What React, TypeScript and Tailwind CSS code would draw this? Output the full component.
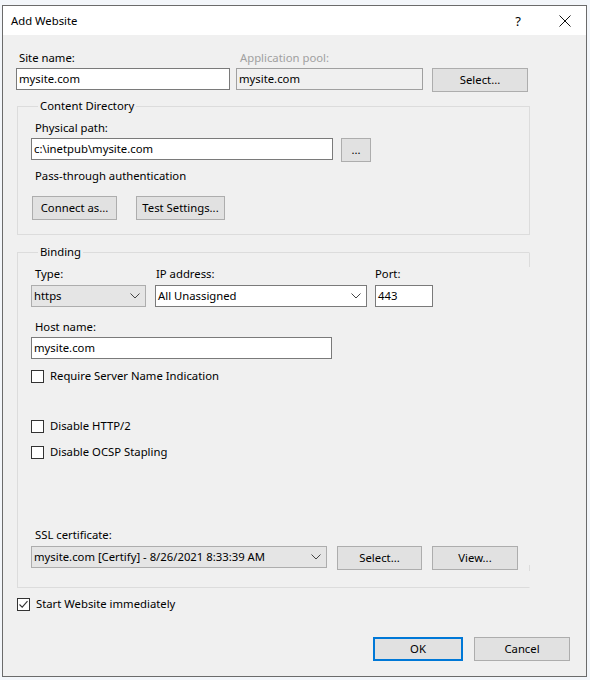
import { useState } from "react";

const font = { fontFamily: '"Noto Sans", "Segoe UI", sans-serif' };

function TextBox({ value, className = "" }: { value: string; className?: string }) {
  return (
    <div className={`h-[22px] border border-[#7a7a7a] bg-white pl-[2px] flex items-center text-black ${className}`}>
      {value}
    </div>
  );
}

function Chevron() {
  return (
    <svg width="10" height="6" viewBox="0 0 10 6" className="shrink-0">
      <path d="M0.5 0.5 L5 5 L9.5 0.5" fill="none" stroke="#444" strokeWidth="1" />
    </svg>
  );
}

function Combo({ value, editable = false, className = "" }: { value: string; editable?: boolean; className?: string }) {
  return (
    <div
      className={`h-[22px] border flex items-center justify-between pl-[2px] pr-[5px] ${
        editable ? "bg-white border-[#7a7a7a]" : "bg-[#e5e5e5] border-[#adadad]"
      } ${className}`}
    >
      <span>{value}</span>
      <Chevron />
    </div>
  );
}

function Btn({ label, className = "" }: { label: string; className?: string }) {
  return (
    <button className={`h-[24px] border border-[#adadad] bg-[#e1e1e1] text-black flex items-center justify-center ${className}`}>
      {label}
    </button>
  );
}

function Check({ label, checked = false }: { label: string; checked?: boolean }) {
  const [on, setOn] = useState(checked);
  return (
    <label className="flex items-center h-[16px] cursor-default" onClick={() => setOn(!on)}>
      <span className="w-[13px] h-[13px] border border-[#333] bg-white flex items-center justify-center">
        {on && (
          <svg width="11" height="11" viewBox="0 0 11 11">
            <path d="M1.5 5.5 L4.2 8.2 L9.5 2.2" fill="none" stroke="#333" strokeWidth="1.1" />
          </svg>
        )}
      </span>
      <span className="ml-[6px]">{label}</span>
    </label>
  );
}

export default function App() {
  return (
    <div className="w-[590px] h-[680px] bg-[#f3f6fa] pt-[5px] pl-[2px] overflow-hidden text-[11.3px] leading-[16px] text-black" style={font}>
      <div className="w-[585px] h-[672px] border border-[#6b6b6b] bg-[#f0f0f0] flex flex-col">
        {/* title bar */}
        <div className="h-[29px] bg-white flex items-center pl-[8px] shrink-0">
          <span>Add Website</span>
          <span className="ml-auto mr-[38px] text-[13px]">?</span>
          <svg width="12" height="12" viewBox="0 0 12 12" className="mr-[15px]">
            <path d="M0.5 0.5 L11.5 11.5 M11.5 0.5 L0.5 11.5" stroke="#111" strokeWidth="1" />
          </svg>
        </div>

        <div className="pl-[13px] pt-[15px] flex flex-col">
          {/* site name row */}
          <div className="flex items-start">
            <div className="w-[214px]">
              <div className="pl-[3px] h-[16px]">Site name:</div>
              <TextBox value="mysite.com" className="mt-[2px]" />
            </div>
            <div className="w-[187px] ml-[6px]">
              <div className="pl-[4px] h-[16px] text-[#a0a0a0]">Application pool:</div>
              <TextBox value="mysite.com" className="mt-[2px] !bg-[#f0f0f0] !border-[#a0a0a0]" />
            </div>
            <Btn label="Select..." className="w-[96px] ml-[9px] mt-[18px]" />
          </div>

          {/* content directory */}
          <fieldset className="ml-[1px] mt-[6px] w-[513px] h-[137px] border border-[#dcdcdc] pl-[14px]">
            <legend className="ml-[6px] px-[2px] leading-[16px]">Content Directory</legend>
            <div className="pl-[3px] mt-[6px]">Physical path:</div>
            <div className="flex items-start mt-[2px]">
              <TextBox value="c:\inetpub\mysite.com" className="w-[302px] -ml-[1px]" />
              <Btn label="..." className="w-[30px] ml-[8px]" />
            </div>
            <div className="pl-[3px] mt-[6px]">Pass-through authentication</div>
            <div className="flex mt-[12px]">
              <Btn label="Connect as..." className="w-[85px]" />
              <Btn label="Test Settings..." className="w-[89px] ml-[19px]" />
            </div>
          </fieldset>

          {/* binding */}
          <fieldset className="relative ml-[1px] mt-[9px] w-[513px] h-[344px] border border-[#dcdcdc] border-r-transparent pl-[14px]">
            <legend className="ml-[6px] px-[2px] leading-[16px]">Binding</legend>
            <div className="absolute right-[-1px] top-[-7px] w-px h-[14px] bg-[#dcdcdc]" />
            <div className="absolute right-[-1px] bottom-[-1px] w-px h-[6px] bg-[#dcdcdc]" />

            <div className="flex items-start mt-[6px]">
              <div className="w-[115px] -ml-[1px]">
                <div className="pl-[4px] h-[16px]">Type:</div>
                <Combo value="https" className="mt-[3px]" />
              </div>
              <div className="w-[212px] ml-[9px]">
                <div className="pl-[1px] h-[16px]">IP address:</div>
                <Combo value="All Unassigned" editable className="mt-[3px]" />
              </div>
              <div className="w-[58px] ml-[8px]">
                <div className="h-[16px]">Port:</div>
                <TextBox value="443" className="mt-[3px]" />
              </div>
            </div>

            <div className="pl-[3px] mt-[12px] h-[16px]">Host name:</div>
            <TextBox value="mysite.com" className="w-[301px] mt-[2px] -ml-[1px]" />

            <div className="mt-[9px] -ml-[1px]">
              <Check label="Require Server Name Indication" />
            </div>
            <div className="mt-[34px] -ml-[1px]">
              <Check label="Disable HTTP/2" />
            </div>
            <div className="mt-[10px] -ml-[1px]">
              <Check label="Disable OCSP Stapling" />
            </div>

            <div className="pl-[3px] mt-[67px] h-[16px]">SSL certificate:</div>
            <div className="flex items-start mt-[3px]">
              <Combo value="mysite.com [Certify] - 8/26/2021 8:33:39 AM" className="w-[296px] -ml-[1px]" />
              <Btn label="Select..." className="w-[85px] ml-[10px]" />
              <Btn label="View..." className="w-[86px] ml-[10px]" />
            </div>
          </fieldset>

          <div className="mt-[8px] ml-[1px]">
            <Check label="Start Website immediately" checked />
          </div>

          <div className="flex mt-[25px] ml-[357px]">
            <button className="w-[90px] h-[24px] border-2 border-[#0078d7] bg-[#e1e1e1]">OK</button>
            <Btn label="Cancel" className="w-[96px] ml-[11px]" />
          </div>
        </div>
      </div>
    </div>
  );
}
